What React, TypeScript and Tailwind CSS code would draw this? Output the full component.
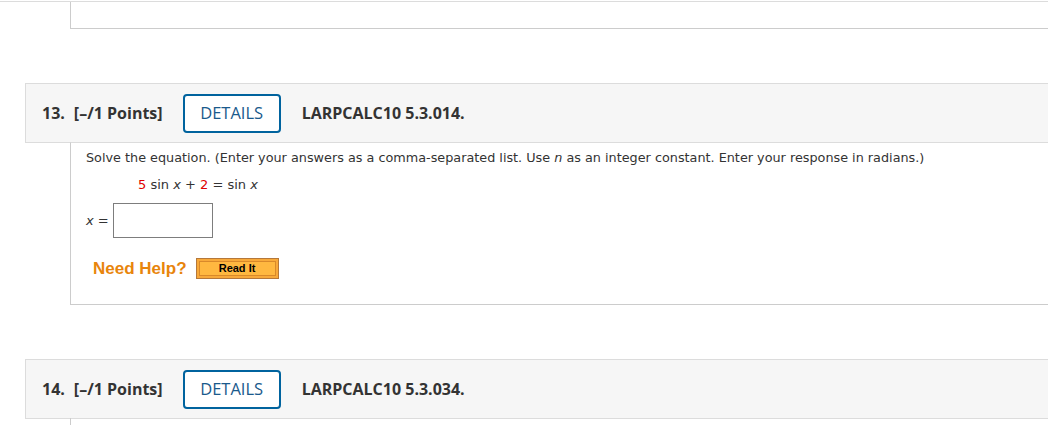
import React from "react";

const os = { fontFamily: '"Open Sans", "Noto Sans", sans-serif' };
const vd = { fontFamily: '"DejaVu Sans", Verdana, sans-serif' };
const ar = { fontFamily: '"Liberation Sans", Arial, sans-serif' };

function Header({ num, code }: { num: string; code: string }) {
  return (
    <div
      className="ml-[25px] h-[60px] flex items-center border-t border-b border-l border-[#dcdcdc] bg-[#f6f6f6] text-[16px] font-bold text-[#333]"
      style={os}
    >
      <span className="ml-[16px]">{num}</span>
      <span className="ml-[9px]">[–/1 Points]</span>
      <div className="ml-[20px] w-[98px] h-[39px] flex items-center justify-center border-2 border-[#00639e] rounded-[4px] bg-white text-[16.5px] font-normal text-[#1a5a8c]">
        DETAILS
      </div>
      <span className="ml-[21px]">{code}</span>
    </div>
  );
}

export default function App() {
  return (
    <div className="w-[1048px] h-[425px] overflow-hidden bg-white">
      <div className="mt-[1px] border-t border-[#dcdcdc]" />
      <div className="ml-[70px] h-[27px] border-l border-b border-[#cccccc]" />
      <div className="h-[54px]" />
      <Header num="13." code="LARPCALC10 5.3.014." />
      <div className="ml-[70px] -mt-[1px] h-[163px] border-l border-b border-t border-t-transparent border-[#cccccc] relative">
        <div className="pl-[15px] pt-[7px] text-[12.8px] text-[#333] leading-[16px]" style={vd}>
          Solve the equation. (Enter your answers as a comma-separated list. Use <i>n</i> as an integer constant. Enter your response in radians.)
        </div>
        <div className="pl-[67px] pt-[11px] text-[13px] text-[#333] leading-[16px]" style={vd}>
          <span className="text-[#e00000]">5</span> sin <i>x</i> + <span className="text-[#e00000]">2</span> = sin <i>x</i>
        </div>
        <div className="pl-[15px] pt-[10px] flex items-center text-[13px] text-[#333]" style={vd}>
          <span>
            <i>x</i> =
          </span>
          <div className="ml-[4px] w-[100px] h-[35px] border border-[#7d7d7d] bg-white" />
        </div>
        <div className="pl-[22px] pt-[18px] flex items-center">
          <span className="text-[17px] font-bold text-[#e8850c]" style={ar}>
            Need Help?
          </span>
          <div className="ml-[9px] w-[83px] h-[21px] border border-[#b5783a] bg-[#f8a93a] p-[2px]">
            <div
              className="w-full h-full border border-[#d9892a] bg-[#ffb840] flex items-center justify-center text-[11px] font-bold text-black leading-none"
              style={ar}
            >
              Read It
            </div>
          </div>
        </div>
      </div>
      <div className="h-[54px]" />
      <Header num="14." code="LARPCALC10 5.3.034." />
      <div className="ml-[70px] -mt-[1px] h-[20px] border-l border-[#cccccc]" />
    </div>
  );
}
